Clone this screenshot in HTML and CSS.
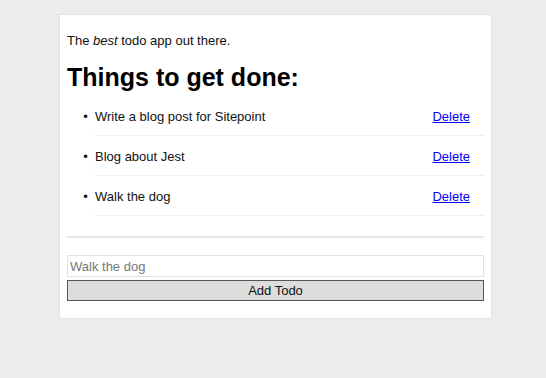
FILE: index.html
```html
<!DOCTYPE html>
<html lang="en">
<head>
    <meta charset="UTF-8">
    <title>Todo</title>
    <link rel="stylesheet" href="styles.css">
</head>
<body>
    <div class="app">
        <p class="intro">The <em>best</em> todo app out there.</p>
        <h1>Things to get done:</h1>
        <ul class="todos">
            <li class="todo">
                <div class="todo-row">
                    <span>Write a blog post for Sitepoint</span>
                    <a href="#">Delete</a>
                </div>
            </li>
            <li class="todo">
                <div class="todo-row">
                    <span>Blog about Jest</span>
                    <a href="#">Delete</a>
                </div>
            </li>
            <li class="todo">
                <div class="todo-row">
                    <span>Walk the dog</span>
                    <a href="#">Delete</a>
                </div>
            </li>
        </ul>
        <form class="add-form">
            <input type="text" placeholder="Walk the dog">
            <button type="submit">Add Todo</button>
        </form>
    </div>
</body>
</html>
```

FILE: styles.css
```css
body {
    margin: 0;
    background-color: #ececec;
    font-family: "Liberation Sans", Arial, sans-serif;
    font-size: 13px;
    color: #111;
}
.app {
    width: 417px;
    margin: 14px 0 0 59px;
    padding: 0 7px 17px 7px;
    background-color: white;
    border: 1px solid #e2e2e2;
}
.intro {
    margin: 0;
    padding-top: 18px;
    line-height: 16px;
}
h1 {
    margin: 13px 0 4px 0;
    font-size: 25px;
    line-height: 30px;
    font-weight: bold;
    color: #000;
}
.todos {
    margin: 0;
    padding-left: 28px;
}
.todo {
    padding: 13px 14px 10px 0;
    line-height: 16px;
    border-bottom: 1px solid #efefef;
}
.todo::marker {
    content: "\2022\00a0\00a0";
}
.todo-row {
    display: flex;
    justify-content: space-between;
}
.todo a {
    color: #0000ee;
}
.add-form {
    margin-top: 20px;
    padding-top: 17px;
    border-top: 2px solid #e8e8e8;
}
.add-form input {
    display: block;
    box-sizing: border-box;
    width: 100%;
    height: 22px;
    margin: 0;
    padding: 0 2px;
    border: 1px solid #e0e0e0;
    font-family: inherit;
    font-size: 13px;
}
.add-form input::placeholder {
    color: #777;
}
.add-form button {
    display: block;
    box-sizing: border-box;
    width: 100%;
    height: 21px;
    margin-top: 3px;
    padding: 0;
    background-color: #dddddd;
    border: 1px solid #555;
    font-family: inherit;
    font-size: 13px;
    color: #111;
}
```
